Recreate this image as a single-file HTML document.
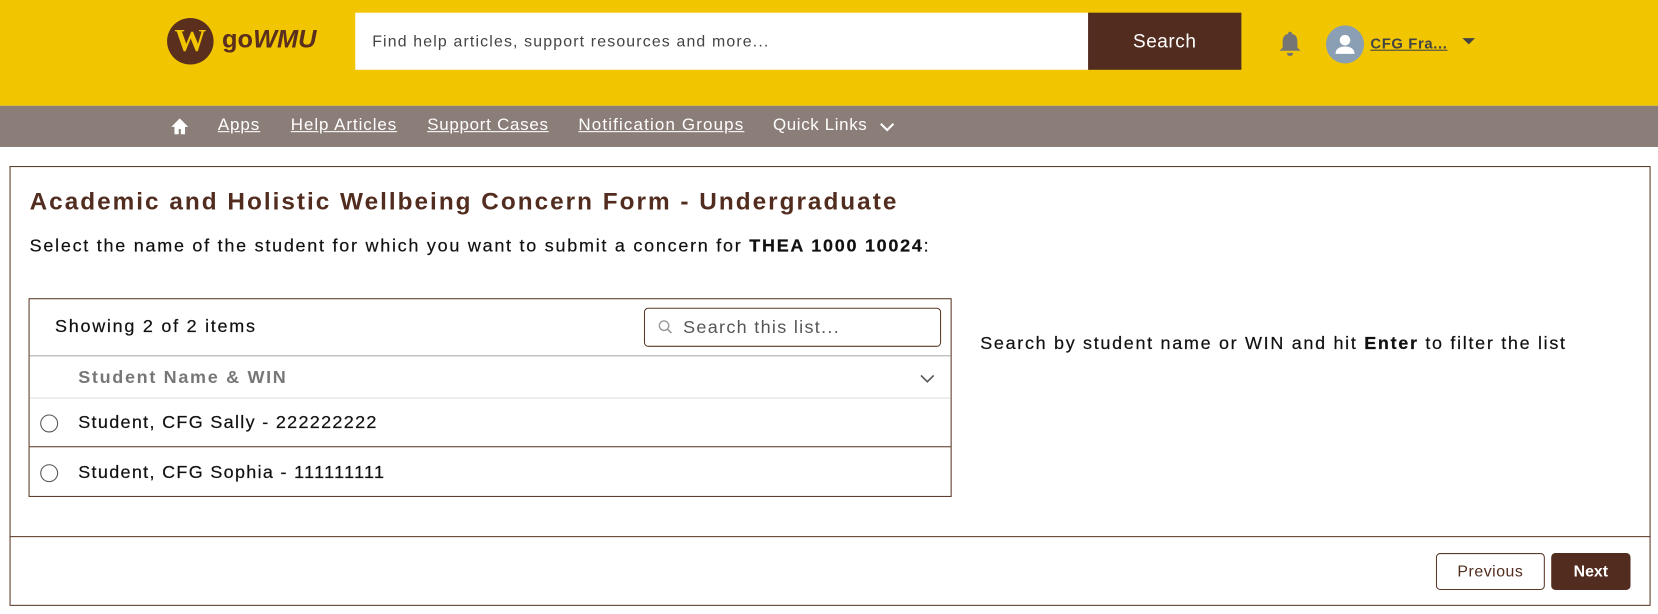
<!DOCTYPE html><html><head><meta charset="utf-8"><style>
*{margin:0;padding:0;box-sizing:border-box}
body{width:1658px;height:614px;background:#fff;font-family:"Liberation Sans",sans-serif;overflow:hidden;color:#111}
#w{position:relative;width:1568px;height:581px;transform:scale(1.0574);transform-origin:0 0}
.a{position:absolute;white-space:nowrap}
</style></head><body><div id="w">
<div class="a" style="left:0;top:0;width:1568px;height:100px;background:#F1C500"></div>
<div class="a" style="left:158px;top:17px;width:44px;height:44px;border-radius:50%;background:#5A2F1E;color:#F1C500;font:bold 30px 'Liberation Serif',serif;text-align:center;line-height:44px">W</div>
<div class="a" style="left:210px;top:24px;font:bold 24px 'Liberation Sans',sans-serif;color:#5A2F1E">go<i>WMU</i></div>
<div class="a" style="left:336px;top:12px;width:694px;height:54px;background:#fff"></div>
<div class="a" style="left:352px;top:31px;font-size:15px;letter-spacing:1.1px;color:#444">Find help articles, support resources and more...</div>
<div class="a" style="left:1029px;top:12px;width:145px;height:54px;background:#522D1F;color:#fff;font-size:18px;letter-spacing:0.5px;text-align:center;line-height:54px">Search</div>
<svg class="a" style="left:1208px;top:28px" width="24" height="26" viewBox="0 0 24 26"><path d="M12 2a2 2 0 0 1 2 2c4 1 5 4 5 8v5l3 3H2l3-3v-5c0-4 1-7 5-8a2 2 0 0 1 2-2z" fill="#757575"/><path d="M9 22h6a3 3 0 0 1-6 0z" fill="#757575"/></svg>
<div class="a" style="left:1254px;top:24px;width:36px;height:36px;border-radius:50%;background:#8A9FB3"></div>
<svg class="a" style="left:1254px;top:24px" width="36" height="36"><circle cx="18" cy="14" r="5" fill="#fff"/><path d="M9 27c0-5 4-7 9-7s9 2 9 7z" fill="#fff"/></svg>
<div class="a" style="left:1296px;top:33px;font-size:14px;letter-spacing:0.6px;font-weight:bold;color:#444;text-decoration:underline">CFG Fra...</div>
<div class="a" style="left:1383px;top:36px;width:0;height:0;border-left:6px solid transparent;border-right:6px solid transparent;border-top:6px solid #444"></div>
<div class="a" style="left:0;top:100px;width:1568px;height:39px;background:#8B7E78"></div>
<svg class="a" style="left:161px;top:111px" width="18" height="17"><path d="M9 1L1 9h3v7h4v-5h2v5h4V9h3z" fill="#fff"/></svg>
<div class="a" style="left:206px;top:110px;font-size:16px;letter-spacing:0.9px;color:#fff"><u>Apps</u></div>
<div class="a" style="left:275px;top:110px;font-size:16px;letter-spacing:0.9px;color:#fff"><u>Help Articles</u></div>
<div class="a" style="left:404px;top:110px;font-size:16px;letter-spacing:0.7px;color:#fff"><u>Support Cases</u></div>
<div class="a" style="left:547px;top:110px;font-size:16px;letter-spacing:1.1px;color:#fff"><u>Notification Groups</u></div>
<div class="a" style="left:731px;top:110px;font-size:16px;letter-spacing:0.6px;color:#fff">Quick Links</div>
<svg class="a" style="left:832px;top:115px" width="14" height="10"><path d="M1 2l6 6 6-6" stroke="#fff" stroke-width="2" fill="none"/></svg>
<div class="a" style="left:9px;top:157px;width:1552px;height:416px;border:1px solid #5B3A29"></div>
<div class="a" style="left:9px;top:507px;width:1552px;height:1px;background:#5B3A29"></div>
<div class="a" style="left:28px;top:177px;font-size:23px;letter-spacing:1.9px;font-weight:bold;color:#522D1F">Academic and Holistic Wellbeing Concern Form - Undergraduate</div>
<div class="a" style="left:28px;top:223px;font-size:17px;letter-spacing:1.65px;-webkit-text-stroke:0.2px #111">Select the name of the student for which you want to submit a concern for <b>THEA 1000 10024</b>:</div>
<div class="a" style="left:27px;top:282px;width:873px;height:188px;border:1px solid #5B3A29"></div>
<div class="a" style="left:52px;top:299px;font-size:17px;letter-spacing:1.65px;-webkit-text-stroke:0.2px #111">Showing 2 of 2 items</div>
<div class="a" style="left:609px;top:291px;width:281px;height:37px;border:1px solid #5B3A29;border-radius:4px"></div>
<svg class="a" style="left:622px;top:302px" width="14" height="14"><circle cx="6" cy="6" r="4.5" stroke="#999" stroke-width="1.3" fill="none"/><path d="M9.5 9.5l3.5 3.5" stroke="#999" stroke-width="1.5"/></svg>
<div class="a" style="left:646px;top:300px;font-size:17px;letter-spacing:1.25px;color:#555">Search this list...</div>
<div class="a" style="left:28px;top:336px;width:871px;height:1px;background:#aaa"></div>
<div class="a" style="left:74px;top:347px;font-size:17px;letter-spacing:1.6px;font-weight:bold;color:#777">Student Name &amp; WIN</div>
<svg class="a" style="left:870px;top:353px" width="14" height="10"><path d="M1 2l6 6 6-6" stroke="#555" stroke-width="1.5" fill="none"/></svg>
<div class="a" style="left:28px;top:376px;width:871px;height:1px;background:#ddd"></div>
<div class="a" style="left:28px;top:422px;width:871px;height:1px;background:#5B3A29"></div>
<div class="a" style="left:38px;top:392px;width:17px;height:17px;border:1px solid #555;border-radius:50%"></div>
<div class="a" style="left:74px;top:390px;font-size:17px;letter-spacing:1.25px;-webkit-text-stroke:0.2px #111">Student, CFG Sally - 222222222</div>
<div class="a" style="left:38px;top:439px;width:17px;height:17px;border:1px solid #555;border-radius:50%"></div>
<div class="a" style="left:74px;top:437px;font-size:17px;letter-spacing:1.25px;-webkit-text-stroke:0.2px #111">Student, CFG Sophia - 111111111</div>
<div class="a" style="left:927px;top:315px;font-size:17px;letter-spacing:1.6px;-webkit-text-stroke:0.2px #111">Search by student name or WIN and hit <b>Enter</b> to filter the list</div>
<div class="a" style="left:1358px;top:523px;width:103px;height:35px;border:1px solid #5B3A29;border-radius:4px;color:#522D1F;font-size:15px;letter-spacing:0.5px;text-align:center;line-height:33px">Previous</div>
<div class="a" style="left:1467px;top:523px;width:75px;height:35px;background:#522D1F;border-radius:4px;color:#fff;font-size:15px;font-weight:bold;text-align:center;line-height:35px">Next</div>
</div></body></html>
